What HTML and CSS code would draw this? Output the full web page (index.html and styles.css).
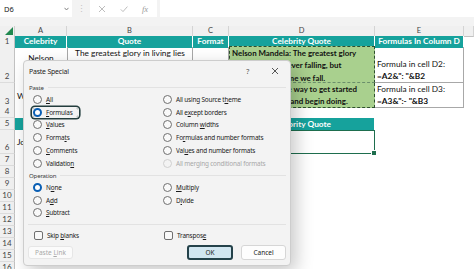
FILE: index.html
```html
<!DOCTYPE html>
<html lang="en">
<head>
<meta charset="utf-8">
<title>Paste Special</title>
<link rel="stylesheet" href="styles.css">
</head>
<body>
<div class="app">
  <div class="topbar">
    <div class="namebox"><span>D6</span><svg class="caret" width="5" height="4" viewBox="0 0 5 4"><path d="M0.5 0.8 L2.5 3 L4.5 0.8" fill="none" stroke="#777" stroke-width="0.9"/></svg></div>
    <div class="grip">⋮</div>
    <div class="fxbtns">
      <svg width="8" height="8" viewBox="0 0 8 8"><path d="M1 1 L7 7 M7 1 L1 7" stroke="#b5b5b5" stroke-width="0.9" fill="none"/></svg>
      <svg width="8" height="8" viewBox="0 0 8 8"><path d="M0.8 4.4 L3 6.6 L7.4 1.6" stroke="#b5b5b5" stroke-width="0.9" fill="none"/></svg>
      <span class="fx">fx</span>
    </div>
    <div class="fbar"></div>
  </div>

  <div class="sheet">
    <div class="row h-head">
      <div class="corner"><span class="tri"></span></div>
      <div class="ch">A</div><div class="ch">B</div><div class="ch">C</div><div class="ch">D</div><div class="ch">E</div><div class="ch"></div>
    </div>
    <div class="row h1">
      <div class="rh">1</div>
      <div class="hd">Celebrity</div><div class="hd">Quote</div><div class="hd">Format</div><div class="hd">Celebrity Quote</div><div class="hd">Formulas In Column D</div><div></div>
    </div>
    <div class="row h2">
      <div class="rh">2</div>
      <div class="c mid">Nelson</div>
      <div class="c top bl">The greatest glory in living lies</div>
      <div class="c bl"></div>
      <div class="c green ants-top">Nelson Mandela: The greatest glory<br>in living lies in never falling, but<br>in rising every time we fall.</div>
      <div class="c bottom bl">Formula in cell D2:<br><b>=A2&amp;": "&amp;B2</b></div>
      <div></div>
    </div>
    <div class="row h3">
      <div class="rh">3</div>
      <div class="c left mid">W</div>
      <div class="c top bl"></div>
      <div class="c bl"></div>
      <div class="c green ants-bot">Walt Disney: The way to get started<br>is to quit talking and begin doing.</div>
      <div class="c bottom bl">Formula in cell D3:<br><b>=A3&amp;":- "&amp;B3</b></div>
      <div></div>
    </div>
    <div class="row h4"><div class="rh">4</div></div>
    <div class="row h5">
      <div class="rh">5</div>
      <div class="hd"></div><div class="hd"></div><div class="hd"></div><div class="hd">Celebrity Quote</div>
    </div>
    <div class="row h6">
      <div class="rh">6</div>
      <div class="c left mid">Jo</div><div class="c"></div><div class="c"></div>
      <div class="c selected"></div>
    </div>
    <div class="row h12"><div class="rh">7</div></div>
    <div class="row h12"><div class="rh">8</div></div>
    <div class="row h12"><div class="rh">9</div></div>
    <div class="row h12"><div class="rh">10</div></div>
    <div class="row h12"><div class="rh">11</div></div>
    <div class="row h12"><div class="rh">12</div></div>
    <div class="row h12"><div class="rh">13</div></div>
    <div class="row h12"><div class="rh">14</div></div>
    <div class="row h12"><div class="rh">15</div></div>
    <div class="row h12"><div class="rh">16</div></div>
  </div>

  <div class="dialog">
    <div class="dlg-title">
      <span class="dlg-name">Paste Special</span>
      <span class="dlg-help">?</span>
      <svg class="dlg-close" width="8" height="8" viewBox="0 0 8 8"><path d="M1 1 L7 7 M7 1 L1 7" stroke="#444" stroke-width="0.9" fill="none"/></svg>
    </div>
    <div class="glabel"><span>Paste</span><i></i></div>
    <div class="opts">
      <div class="opt"><span class="radio"></span><span><u>A</u>ll</span></div>
      <div class="opt"><span class="radio"></span><span>All using Source t<u>h</u>eme</span></div>
      <div class="opt focus"><span class="radio on"></span><span><u>F</u>ormulas</span></div>
      <div class="opt"><span class="radio"></span><span>All e<u>x</u>cept borders</span></div>
      <div class="opt"><span class="radio"></span><span><u>V</u>alues</span></div>
      <div class="opt"><span class="radio"></span><span>Column <u>w</u>idths</span></div>
      <div class="opt"><span class="radio"></span><span>Forma<u>t</u>s</span></div>
      <div class="opt"><span class="radio"></span><span>Fo<u>r</u>mulas and number formats</span></div>
      <div class="opt"><span class="radio"></span><span><u>C</u>omments</span></div>
      <div class="opt"><span class="radio"></span><span>Val<u>u</u>es and number formats</span></div>
      <div class="opt"><span class="radio"></span><span>Validatio<u>n</u></span></div>
      <div class="opt disabled"><span class="radio"></span><span>All merging conditional formats</span></div>
    </div>
    <div class="glabel"><span>Operation</span><i></i></div>
    <div class="opts ops">
      <div class="opt"><span class="radio on"></span><span>N<u>o</u>ne</span></div>
      <div class="opt"><span class="radio"></span><span><u>M</u>ultiply</span></div>
      <div class="opt"><span class="radio"></span><span>A<u>d</u>d</span></div>
      <div class="opt"><span class="radio"></span><span>D<u>i</u>vide</span></div>
      <div class="opt"><span class="radio"></span><span><u>S</u>ubtract</span></div>
      <div></div>
    </div>
    <div class="sepline"></div>
    <div class="opts checks">
      <div class="opt"><span class="check"></span><span>Skip <u>b</u>lanks</span></div>
      <div class="opt"><span class="check"></span><span>Transpos<u>e</u></span></div>
    </div>
    <div class="buttons">
      <button class="btn ghost">Paste <u>L</u>ink</button>
      <span class="spacer"></span>
      <button class="btn primary">OK</button>
      <button class="btn">Cancel</button>
    </div>
  </div>
</div>
</body>
</html>
```

FILE: styles.css
```css
* { box-sizing: border-box; margin: 0; padding: 0; }
html, body { width: 474px; height: 269px; overflow: hidden; background: #fff; }
body { font-family: Lato, "Liberation Sans", sans-serif; }
.app { position: relative; width: 474px; height: 269px; overflow: hidden; background: #fff; }

/* formula bar */
.topbar { height: 26px; background: #f3f3f3; display: flex; align-items: flex-start; }
.namebox { width: 72px; height: 17px; background: #fff; display: flex; align-items: center; justify-content: space-between; padding: 0 3px 0 4px; font-family: "Noto Sans", sans-serif; font-size: 7.5px; color: #222; }
.grip { width: 18px; height: 17px; display: flex; align-items: center; justify-content: center; color: #c4c4c4; font-size: 9px; }
.fxbtns { width: 67px; height: 17px; background: #fff; display: flex; align-items: center; gap: 14px; padding-left: 8px; }
.fx { font-family: "Liberation Serif", serif; font-style: italic; font-size: 8.5px; color: #9a9a9a; }
.fbar { flex: 1; margin-left: 3px; height: 17px; background: #fff; }

/* grid */
.sheet { display: flex; flex-direction: column; font-size: 8.3px; color: #111; }
.row { display: grid; grid-template-columns: 15px 52px 126px 36px 146px 89px 1fr; }
.h-head { height: 10px; }
.h1 { height: 11px; }
.h2 { height: 36px; }
.h3 { height: 22px; }
.h4 { height: 13px; }
.h5 { height: 12px; }
.h6 { height: 24px; }
.h12 { height: 12px; }

.corner { background: #f0f0f0; border-right: 1px solid #cfcfcf; border-bottom: 1px solid #c2c2c2; display: flex; align-items: flex-end; justify-content: flex-end; padding: 0 1px 1px 0; }
.tri { width: 0; height: 0; border-left: 8px solid transparent; border-bottom: 8px solid #21884f; }
.ch { background: #f0f0f0; border-right: 1px solid #d4d4d4; border-bottom: 1px solid #c2c2c2; color: #444; font-size: 7.5px; line-height: 10px; text-align: center; }
.rh { background: #f0f0f0; border-right: 1px solid #c2c2c2; border-bottom: 1px solid #dcdcdc; color: #444; font-size: 8px; line-height: 11px; display: flex; align-items: flex-end; justify-content: center; }

.hd { background: #16a29c; color: #fff; font-weight: 700; text-align: center; line-height: 11px; border-right: 1px solid #fff; white-space: nowrap; overflow: hidden; }
.h5 .hd { line-height: 12px; }

.c { white-space: nowrap; overflow: hidden; line-height: 12px; text-align: center; padding: 0 2px; }
.mid { display: flex; flex-direction: column; justify-content: center; }
.bottom { display: flex; flex-direction: column; justify-content: flex-end; text-align: left; overflow: visible; }
.left { text-align: left; padding-left: 2px; }
.h2 .mid { padding-top: 2px; justify-content: flex-start; padding-top: 5px; }
.bl { border-right: 1px solid #a8a8a8; border-bottom: 1px solid #a8a8a8; }
.c.top.bl { border-left: 1px solid #a8a8a8; }

.green { background: #a9d08e; font-weight: 700; font-size: 7.9px; text-align: left; padding-left: 2px; line-height: 12.3px; border-left: 1px dashed #2f4f2f; border-right: 1px dashed #2f4f2f; }
.ants-top { border-top: 1px dashed #2f4f2f; border-bottom: 1px dashed #6b8f6b; margin-top: -1px; }
.ants-bot { border-bottom: 1px dashed #2f4f2f; }

.selected { position: relative; border: 1.5px solid #1e6e4e; overflow: visible; }
.selected::after { content: ""; position: absolute; right: -3px; bottom: -3px; width: 4px; height: 4px; background: #1e6e4e; border: 1px solid #fff; }

/* dialog */
.dialog { position: absolute; left: 23px; top: 60px; width: 268px; height: 206px; background: #f3f3f3; border: 1px solid #cdcdcd; border-radius: 4px; box-shadow: 5px 6px 18px rgba(0,0,0,0.22); font-family: "Noto Sans", sans-serif; font-size: 6.4px; letter-spacing: -0.18px; color: #1b1b1b; display: flex; flex-direction: column; padding: 0 4px 0 4px; }
.dlg-title { height: 20px; display: flex; align-items: center; padding-left: 1px; }
.dlg-name { flex: 1; font-size: 6.9px; color: #222; }
.dlg-help { color: #555; font-size: 7px; margin-right: 22px; }
.dlg-close { margin-right: 7px; }

.glabel { height: 12px; display: flex; align-items: center; gap: 4px; font-size: 6.1px; color: #3a3a3a; padding-left: 1px; }
.glabel i { flex: 1; height: 1px; background: #e2e2e2; }

.opts { display: grid; grid-template-columns: 130px 1fr; grid-auto-rows: 12.75px; padding-left: 5px; align-items: center; }
.ops { grid-auto-rows: 12.5px; }
.opt { display: inline-flex; align-items: center; gap: 4px; justify-self: start; white-space: nowrap; border-radius: 2px; }
.opt u { text-decoration-thickness: 0.5px; text-underline-offset: 1px; }
.radio { width: 9px; height: 9px; border-radius: 50%; border: 1px solid #6f6f6f; background: #f9f9f9; flex: none; }
.radio.on { border: 2.5px solid #0a5fb4; background: #fff; }
.focus { box-shadow: 0 0 0 1px #f3f3f3, 0 0 0 2.6px #233d3d; padding-right: 5px; }
.disabled { color: #a8a8a8; }
.disabled .radio { border-color: #d0d0d0; background: #f3f3f3; }

.sepline { height: 1px; background: #e2e2e2; margin: 5px 0 4px 0; }
.checks { grid-auto-rows: 12px; padding-left: 6px; }
.check { width: 9px; height: 9px; border: 1px solid #6f6f6f; border-radius: 2px; background: #f9f9f9; flex: none; }

.buttons { display: flex; align-items: center; gap: 8px; margin-top: 4px; }
.spacer { flex: 1; }
.btn { font-family: "Noto Sans", sans-serif; font-size: 6.5px; height: 15px; width: 45px; border: 1px solid #d6d6d6; border-radius: 3px; background: #fdfdfd; color: #222; }
.btn.ghost { color: #a9a9a9; background: #fbfbfb; border-color: #e6e6e6; height: 13px; }
.btn.primary { background: #d1e6f0; border: 2px solid #24424a; width: 46px; }
```
